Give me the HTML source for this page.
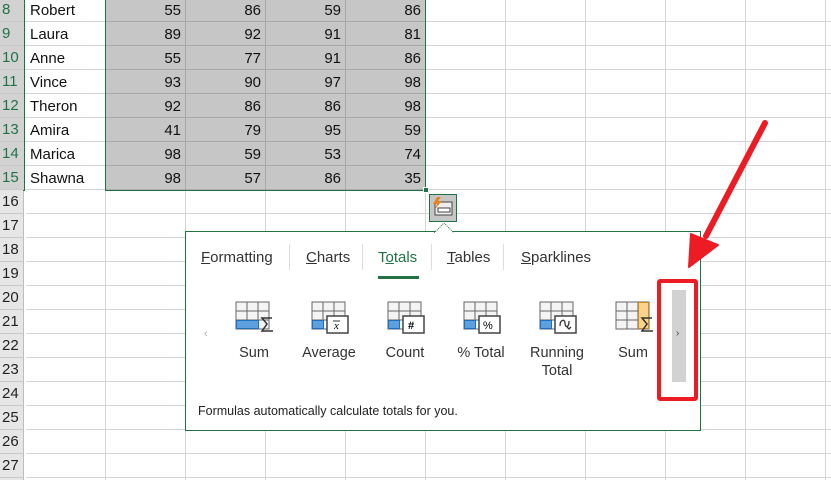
<!DOCTYPE html><html><head><style>
*{margin:0;padding:0;box-sizing:border-box}
body{width:831px;height:480px;overflow:hidden;background:#fff;font-family:"Liberation Sans",sans-serif;position:relative}
.grid{position:absolute;left:26px;top:0;width:805px;height:480px;
background-image:repeating-linear-gradient(to right,transparent 0,transparent 79px,#d4d4d4 79px,#d4d4d4 80px),repeating-linear-gradient(to bottom,transparent 0,transparent 22px,#d4d4d4 22px,#d4d4d4 23px,transparent 23px,transparent 24px);background-position:0 0,0 -1px}
.rh{position:absolute;left:0;top:0;width:24px;height:480px;background:#e6e6e6;border-right:1px solid #bdbdbd}
.r{position:absolute;left:0;width:24px;height:24px;font-size:15px;line-height:23px;padding-left:2px;color:#222;border-bottom:1px solid #c8c8c8}
.r.s{background:#d2d2d2;color:#217346}
.sel{position:absolute;left:105px;top:-2px;width:321px;height:193px;background:#c6c6c6;border:1.5px solid #217346;border-top:none;
background-image:repeating-linear-gradient(to right,transparent 0,transparent 79px,#a9a9a9 79px,#a9a9a9 80px),repeating-linear-gradient(to bottom,transparent 0,transparent 23px,#a9a9a9 23px,#a9a9a9 24px)}
.n{position:absolute;font-size:15px;color:#111;line-height:24px}
.c{position:absolute;font-size:15px;color:#111;width:76px;text-align:right;line-height:24px}
.pop{position:absolute;left:185px;top:231px;width:516px;height:200px;background:#fff;border:1px solid #217346}
.tab{position:absolute;top:17px;font-size:15px;color:#333}
.sep{position:absolute;top:12px;width:1px;height:26px;background:#ddd}
.lab{position:absolute;font-size:14.5px;color:#333;text-align:center;width:80px}
</style></head><body>
<div class="grid"></div>
<div class="rh"></div>
<div style="position:absolute;left:24px;top:-2px;width:81px;height:193px;background:#fff;background-image:repeating-linear-gradient(to bottom,transparent 0,transparent 23px,#d4d4d4 23px,#d4d4d4 24px)"></div>
<div style="position:absolute;left:23px;top:0;width:2px;height:191px;background:#217346"></div>
<div class="sel"></div>
<div style="position:absolute;left:423px;top:187px;width:6px;height:6px;background:#217346;border:1px solid #fff"></div>

<div class="r s" style="top:-2px">8</div><div class="r s" style="top:22px">9</div><div class="r s" style="top:46px">10</div><div class="r s" style="top:70px">11</div><div class="r s" style="top:94px">12</div><div class="r s" style="top:118px">13</div><div class="r s" style="top:142px">14</div><div class="r s" style="top:166px">15</div>
<div class="r" style="top:190px">16</div><div class="r" style="top:214px">17</div><div class="r" style="top:238px">18</div><div class="r" style="top:262px">19</div><div class="r" style="top:286px">20</div><div class="r" style="top:310px">21</div><div class="r" style="top:334px">22</div><div class="r" style="top:358px">23</div><div class="r" style="top:382px">24</div><div class="r" style="top:406px">25</div><div class="r" style="top:430px">26</div><div class="r" style="top:454px">27</div>

<div class="n" style="left:30px;top:-1px">Robert</div><div class="c" style="left:105px;top:-1px">55</div><div class="c" style="left:185px;top:-1px">86</div><div class="c" style="left:265px;top:-1px">59</div><div class="c" style="left:345px;top:-1px">86</div>
<div class="n" style="left:30px;top:23px">Laura</div><div class="c" style="left:105px;top:23px">89</div><div class="c" style="left:185px;top:23px">92</div><div class="c" style="left:265px;top:23px">91</div><div class="c" style="left:345px;top:23px">81</div>
<div class="n" style="left:30px;top:47px">Anne</div><div class="c" style="left:105px;top:47px">55</div><div class="c" style="left:185px;top:47px">77</div><div class="c" style="left:265px;top:47px">91</div><div class="c" style="left:345px;top:47px">86</div>
<div class="n" style="left:30px;top:71px">Vince</div><div class="c" style="left:105px;top:71px">93</div><div class="c" style="left:185px;top:71px">90</div><div class="c" style="left:265px;top:71px">97</div><div class="c" style="left:345px;top:71px">98</div>
<div class="n" style="left:30px;top:95px">Theron</div><div class="c" style="left:105px;top:95px">92</div><div class="c" style="left:185px;top:95px">86</div><div class="c" style="left:265px;top:95px">86</div><div class="c" style="left:345px;top:95px">98</div>
<div class="n" style="left:30px;top:119px">Amira</div><div class="c" style="left:105px;top:119px">41</div><div class="c" style="left:185px;top:119px">79</div><div class="c" style="left:265px;top:119px">95</div><div class="c" style="left:345px;top:119px">59</div>
<div class="n" style="left:30px;top:143px">Marica</div><div class="c" style="left:105px;top:143px">98</div><div class="c" style="left:185px;top:143px">59</div><div class="c" style="left:265px;top:143px">53</div><div class="c" style="left:345px;top:143px">74</div>
<div class="n" style="left:30px;top:167px">Shawna</div><div class="c" style="left:105px;top:167px">98</div><div class="c" style="left:185px;top:167px">57</div><div class="c" style="left:265px;top:167px">86</div><div class="c" style="left:345px;top:167px">35</div>

<div style="position:absolute;left:429px;top:194px;width:28px;height:28px;background:#c6c6c6;border:1px solid #217346">
<svg width="26" height="26" viewBox="0 0 26 26"><rect x="5" y="7" width="17" height="13" fill="#eee" stroke="#444"/><rect x="8" y="13" width="12" height="4" fill="#fff" stroke="#444"/><path d="M7 2 L3 9 L7 9 L5 14 L12 6 L8 6 L11 2Z" fill="#e8821e"/></svg></div>

<div class="pop">
<svg style="position:absolute;left:248px;top:-9px" width="20" height="10"><path d="M0 10 L10 0 L20 10" fill="#fff" stroke="#217346" stroke-dasharray="1 1"/></svg>
<div class="tab" style="left:15px"><u>F</u>ormatting</div>
<div class="sep" style="left:103px"></div>
<div class="tab" style="left:120px"><u>C</u>harts</div>
<div class="sep" style="left:176px"></div>
<div class="tab" style="left:192px;color:#217346">T<u>o</u>tals</div>
<div style="position:absolute;left:192px;top:44px;width:41px;height:3px;background:#217346"></div>
<div class="sep" style="left:245px"></div>
<div class="tab" style="left:261px"><u>T</u>ables</div>
<div class="sep" style="left:317px"></div>
<div class="tab" style="left:335px"><u>S</u>parklines</div>
<div style="position:absolute;left:18px;top:96px;font-size:11px;color:#aaa">‹</div>

<svg style="position:absolute;left:48px;top:68px" width="42" height="38">
<rect x="2" y="2" width="33" height="27" fill="#f4f4f4" stroke="#666"/>
<path d="M2 11H35M2 20H35M13 2V29M24 2V29" stroke="#666"/>
<rect x="2.5" y="20.5" width="22" height="8" fill="#5ea0dd" stroke="#1f6fbf"/>
<path d="M38 18 H28 L33 24 L28 31 H39" fill="none" stroke="#333" stroke-width="1.5"/></svg>
<div class="lab" style="left:28px;top:113px">Sum</div>

<svg style="position:absolute;left:124px;top:68px" width="42" height="38">
<rect x="2" y="2" width="33" height="27" fill="#f4f4f4" stroke="#666"/><path d="M2 11H35M2 20H35M13 2V29M24 2V29" stroke="#666"/>
<rect x="2.5" y="20.5" width="11" height="8" fill="#5ea0dd" stroke="#1f6fbf"/>
<rect x="17" y="16" width="21" height="17" fill="#fff" stroke="#444" stroke-width="1.5"/><text x="24" y="29" font-size="11" font-style="italic" font-family="Liberation Serif">x</text><path d="M23 21H30" stroke="#333"/></svg>
<div class="lab" style="left:103px;top:113px">Average</div>

<svg style="position:absolute;left:200px;top:68px" width="42" height="38">
<rect x="2" y="2" width="33" height="27" fill="#f4f4f4" stroke="#666"/><path d="M2 11H35M2 20H35M13 2V29M24 2V29" stroke="#666"/>
<rect x="2.5" y="20.5" width="11" height="8" fill="#5ea0dd" stroke="#1f6fbf"/>
<rect x="17" y="16" width="21" height="17" fill="#fff" stroke="#444" stroke-width="1.5"/><text x="22" y="29" font-size="11" font-weight="bold">#</text></svg>
<div class="lab" style="left:179px;top:113px">Count</div>

<svg style="position:absolute;left:276px;top:68px" width="42" height="38">
<rect x="2" y="2" width="33" height="27" fill="#f4f4f4" stroke="#666"/><path d="M2 11H35M2 20H35M13 2V29M24 2V29" stroke="#666"/>
<rect x="2.5" y="20.5" width="11" height="8" fill="#5ea0dd" stroke="#1f6fbf"/>
<rect x="17" y="16" width="21" height="17" fill="#fff" stroke="#444" stroke-width="1.5"/><text x="21" y="29" font-size="11">%</text></svg>
<div class="lab" style="left:255px;top:113px">% Total</div>

<svg style="position:absolute;left:352px;top:68px" width="42" height="38">
<rect x="2" y="2" width="33" height="27" fill="#f4f4f4" stroke="#666"/><path d="M2 11H35M2 20H35M13 2V29M24 2V29" stroke="#666"/>
<rect x="2.5" y="20.5" width="11" height="8" fill="#5ea0dd" stroke="#1f6fbf"/>
<rect x="17" y="16" width="21" height="17" fill="#fff" stroke="#444" stroke-width="1.5"/><path d="M22 26 C22 19 27 19 27 23 C27 28 31 28 31 21 M29 27 L31 29 L33 27" fill="none" stroke="#333" stroke-width="1.3"/></svg>
<div class="lab" style="left:331px;top:113px">Running<br><span style="line-height:20px">Total</span></div>

<svg style="position:absolute;left:428px;top:68px" width="42" height="38">
<rect x="2" y="2" width="33" height="27" fill="#f4f4f4" stroke="#666"/><path d="M2 11H35M2 20H35M13 2V29M24 2V29" stroke="#666"/>
<rect x="24.5" y="2.5" width="10" height="26" fill="#fbd38b" stroke="#d08a20"/>
<path d="M38 18 H28 L33 24 L28 31 H39" fill="none" stroke="#333" stroke-width="1.5"/></svg>
<div class="lab" style="left:407px;top:113px">Sum</div>

<div style="position:absolute;left:486px;top:58px;width:14px;height:92px;background:#d2d2d2"></div>
<div style="position:absolute;left:490px;top:96px;font-size:10px;color:#444">›</div>
<div style="position:absolute;left:12px;top:172px;font-size:12.5px;color:#222">Formulas automatically calculate totals for you.</div>
</div>

<div style="position:absolute;left:657px;top:279px;width:41px;height:122px;border:4px solid #ed1c24;border-radius:3px"></div>
<svg style="position:absolute;left:0;top:0" width="831" height="480"><path d="M765 123 L706 236" stroke="#ed1c24" stroke-width="6" stroke-linecap="round"/><path d="M689 267 L691 234 L718 245 Z" fill="#ed1c24" stroke="#ed1c24" stroke-width="2" stroke-linejoin="round"/></svg>
</body></html>
